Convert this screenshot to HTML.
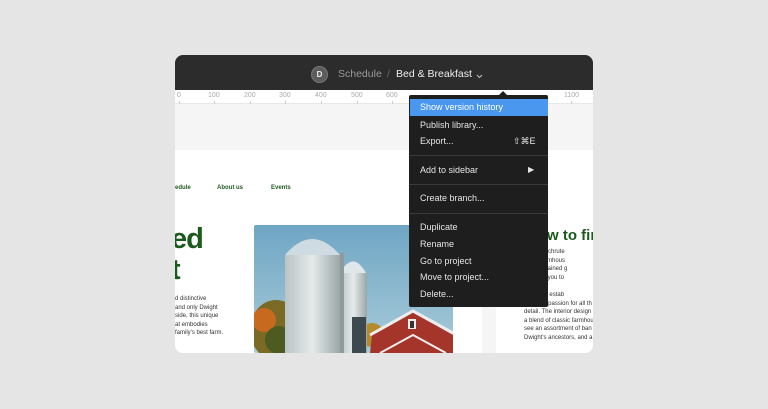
<!DOCTYPE html>
<html><head><meta charset="utf-8"><style>
*{margin:0;padding:0;box-sizing:border-box}
body{width:768px;height:409px;background:#e5e5e5;font-family:"Liberation Sans",sans-serif;position:relative;overflow:hidden}
.card{position:absolute;left:175px;top:55px;width:418px;height:298px;border-radius:8px;overflow:hidden;background:#f5f5f5}
.hdr{position:absolute;left:0;top:0;width:418px;height:35px;background:#2c2c2c}
.av{position:absolute;left:136px;top:11px;width:17px;height:17px;border-radius:50%;background:#5c5c5c;border:1px solid #777;color:#eee;font-size:8px;font-weight:bold;text-align:center;line-height:15px}
.t{position:absolute;font-size:10.5px;white-space:nowrap}
.ruler{position:absolute;left:0;top:35px;width:418px;height:14px;background:#fff;border-bottom:1px solid #e8e8e8}
.ruler span{position:absolute;top:2px;font-size:7px;color:#aaa}
.ruler i{position:absolute;top:11px;width:1px;height:3px;background:#ccc}
.page{position:absolute;left:0;top:95px;width:307px;height:203px;background:#fff}
.page2{position:absolute;left:321px;top:95px;width:97px;height:203px;background:#fff}
.nav{position:absolute;top:130px;font-size:6px;font-weight:bold;color:#1f5a1f}
.big{position:absolute;font-size:29px;font-weight:bold;color:#1c5a1c;letter-spacing:-1px;white-space:nowrap}
.p{position:absolute;font-size:6px;line-height:8.6px;color:#333;white-space:nowrap}
.menu{position:absolute;left:409px;top:95px;width:139px;height:212px;background:#1e1e1e;border-radius:2px}
.menu div{position:absolute;left:11px;font-size:9px;color:#e6e6e6;white-space:nowrap}
.hl{position:absolute;left:1px;top:4px;width:138px;height:17px;background:#4a97ef}
.sep{position:absolute;left:0;width:139px;height:1px;background:#3a3a3a}
.arrow{position:absolute;left:499px;top:91px;width:0;height:0;border-left:4px solid transparent;border-right:4px solid transparent;border-bottom:4px solid #1e1e1e}
</style></head><body>
<div class="card">
<div class="hdr">
<div class="av">D</div>
<div class="t" style="left:163px;top:13px;color:#9a9a9a">Schedule</div>
<div class="t" style="left:212px;top:13px;color:#666">/</div>
<div class="t" style="left:221px;top:13px;color:#eee">Bed &amp; Breakfast</div>
<svg style="position:absolute;left:301px;top:19px" width="7" height="5" viewBox="0 0 7 5"><path d="M1 1 L3.5 3.5 L6 1" stroke="#bbb" stroke-width="1.1" fill="none"/></svg>
</div>
<div class="ruler">
<span style="left:2px">0</span><span style="left:33px">100</span><span style="left:69px">200</span><span style="left:104px">300</span><span style="left:140px">400</span><span style="left:176px">500</span><span style="left:211px">600</span><span style="left:389px">1100</span>
<i style="left:4px"></i><i style="left:39px"></i><i style="left:75px"></i><i style="left:110px"></i><i style="left:146px"></i><i style="left:182px"></i><i style="left:217px"></i><i style="left:396px"></i>
</div>
<div class="page"></div>
<div class="page2"></div>
<div class="nav" style="left:0">edule</div>
<div class="nav" style="left:42px">About us</div>
<div class="nav" style="left:96px">Events</div>
<div class="big" style="left:-4px;top:168px">ed</div>
<div class="big" style="left:-4px;top:199px">t</div>
<div class="p" style="left:0;top:240px">d distinctive<br>and only Dwight<br>side, this unique<br>at embodies<br>family's best farm.</div>
<svg style="position:absolute;left:79px;top:170px" width="199" height="128" viewBox="0 0 199 128">
<defs><linearGradient id="sk" x1="0" y1="0" x2="0" y2="1"><stop offset="0" stop-color="#6fa6c4"/><stop offset="1" stop-color="#a9cbd9"/></linearGradient>
<linearGradient id="si" x1="0" y1="0" x2="1" y2="0"><stop offset="0" stop-color="#b9c4c4"/><stop offset=".5" stop-color="#e4ebea"/><stop offset="1" stop-color="#9aa6a6"/></linearGradient></defs>
<rect width="199" height="128" fill="url(#sk)" rx="2"/>
<ellipse cx="22" cy="105" rx="26" ry="30" fill="#7a6a25"/>
<circle cx="10" cy="95" r="12" fill="#c7691f"/>
<circle cx="25" cy="115" r="14" fill="#4d5a22"/>
<circle cx="118" cy="110" r="12" fill="#b58a2a"/>
<path d="M86 48 Q99 25 112 48 Z" fill="#dfe7ea"/>
<rect x="86" y="48" width="27" height="80" fill="url(#si)"/>
<path d="M31 30 Q58 -2 86 30 Z" fill="#cfdbe2"/>
<rect x="31" y="30" width="55" height="98" fill="url(#si)"/>
<rect x="86" y="28" width="4" height="100" fill="#8f9a9a"/>
<rect x="98" y="92" width="14" height="36" fill="#3c4a4f"/>
<path d="M116 128 L118 110 L159 87 L199 110 L199 128 Z" fill="#a5352a"/>
<path d="M116 110 L159 86 L199 108" stroke="#eee" stroke-width="3" fill="none"/>
<path d="M126 128 L159 110 L192 128" stroke="#eee" stroke-width="2" fill="none"/>
<rect x="154" y="94" width="8" height="10" fill="#eee"/><rect x="156" y="96" width="4" height="7" fill="#333"/>
</svg>
<div class="big" style="left:372px;top:172px;font-size:15px;letter-spacing:0">w to fin</div>
<div class="p" style="left:349px;top:193px">proach Schrute<br>rustic farmhous<br>sly maintained g<br>, inviting you to<br>y.</div>
<div class="p" style="left:349px;top:236px">enter the estab<br>Dwight's passion for all th<br>detail. The interior design<br>a blend of classic farmhou<br>see an assortment of ban<br>Dwight's ancestors, and a</div>
</div>
<div class="arrow"></div>
<div class="menu">
<div class="hl" style="left:1px"></div>
<div style="top:7px;color:#fff">Show version history</div>
<div style="top:25px">Publish library...</div>
<div style="top:41px">Export...</div>
<div style="top:41px;left:104px">⇧⌘E</div>
<span class="sep" style="top:60px"></span>
<div style="top:70px">Add to sidebar</div>
<div style="top:70px;left:119px;font-size:8px">▶</div>
<span class="sep" style="top:89px"></span>
<div style="top:98px">Create branch...</div>
<span class="sep" style="top:118px"></span>
<div style="top:127px">Duplicate</div>
<div style="top:144px">Rename</div>
<div style="top:161px">Go to project</div>
<div style="top:177px">Move to project...</div>
<div style="top:194px">Delete...</div>
</div>
</body></html>
